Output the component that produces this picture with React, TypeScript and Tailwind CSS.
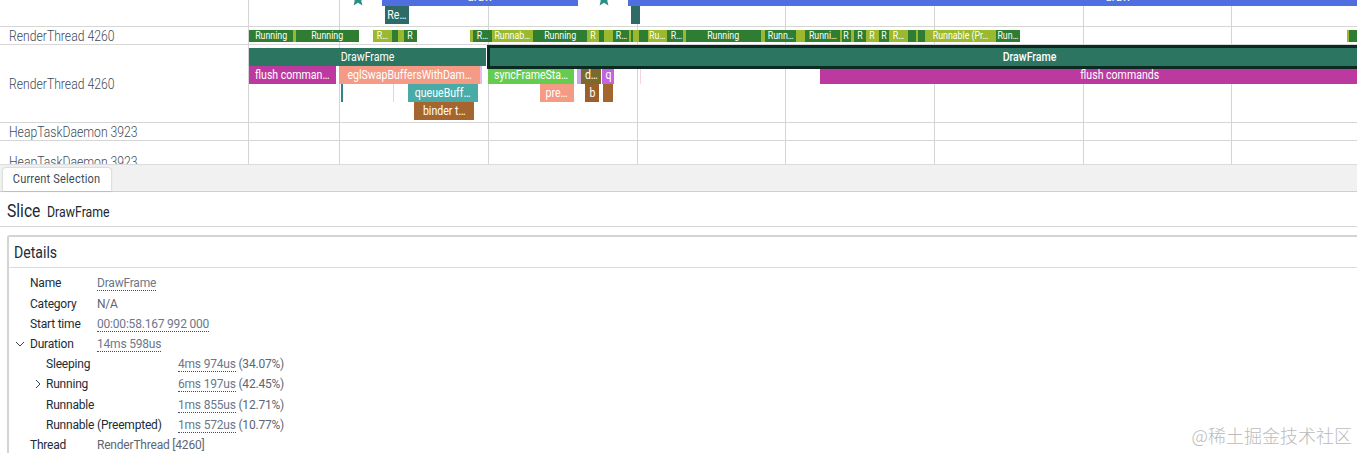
import React from "react";

type S = { x: number; e: number; c: string; t?: string };

const D = "#2f7d32";
const L = "#9ab92f";
const run = (a: [number, number, string, string?][]): S[] => a.map(([x, e, c, t]) => ({ x, e, c, t }));

const threadState = run([
  [249, 293, D, "Running"], [293, 296, L], [296, 359, D, "Running"],
  [373, 392, L, "R…"], [392, 398, D], [398, 404, L], [404, 417, D, "R"],
  [470, 473, L], [473, 492, D, "R…"], [492, 533, L, "Runnab…"], [533, 587, D, "Running"],
  [587, 599, L, "R"], [599, 604, D], [604, 613, L], [613, 629, D, "R…"], [629, 631, L], [631, 633, D], [633, 639, L],
  [639, 648, D], [648, 667, L, "Ru…"], [667, 669, D], [669, 683, D, "R…"], [683, 686, L],
  [686, 761, D, "Running"], [761, 765, L], [765, 796, D, "Runn…"], [796, 805, L], [805, 840, D, "Runni…"],
  [840, 842, L], [842, 851, D, "R"], [851, 854, L], [854, 866, D, "R"], [866, 879, L, "R"], [879, 889, D, "R"],
  [889, 908, L, "R…"], [908, 916, D], [916, 918, L], [918, 925, D], [925, 996, L, "Runnable (Pr…"],
  [996, 1020, D, "Run…"], [1347, 1349, L], [1349, 1357, D],
]);

const row3 = run([
  [249, 336, "#bc3aa0", "flush comman…"], [339, 480, "#f59a85", "eglSwapBuffersWithDam…"], [480, 482, "#e9bce6"],
  [488, 574, "#66cc4f", "syncFrameSta…"], [577, 581, "#c8a6ec"], [581, 601, "#7b6a2e", "d…"], [602, 614, "#c264e0", "q"],
  [640, 641, "#f8d4e2"], [820, 1420, "#bc3aa0", "flush commands"],
]);
const row4 = run([
  [341, 343, "#33808f"], [393, 394, "#dcdcc0"], [408, 478, "#4aaba6", "queueBuff…"],
  [540, 574, "#f59a85", "pre…"], [585, 599, "#9c5f2c", "b"], [603, 613, "#a5652f"],
]);
const row5 = run([[414, 474, "#a5652f", "binder t…"]]);

const grid = [248, 339, 488, 637, 785, 934, 1083, 1231];

function Squeeze({ children }: { children: React.ReactNode }) {
  return <span className="inline-block shrink-0 scale-x-[0.88]">{children}</span>;
}

function Slices({ items, h, size }: { items: S[]; h: string; size: string }) {
  return (
    <div className={`relative ${h}`}>
      {items.map((s, i) => (
        <div
          key={i}
          className={`absolute top-0 bottom-0 flex items-center justify-center overflow-hidden whitespace-nowrap text-white ${size}`}
          style={{ left: s.x - 249, width: s.e - s.x, backgroundColor: s.c }}
        >
          {s.t && <Squeeze>{s.t}</Squeeze>}
        </div>
      ))}
    </div>
  );
}

function Label({ children }: { children: React.ReactNode }) {
  return (
    <div className="w-[249px] shrink-0 pl-[9px] pt-[2px] text-[14px] font-light text-[#3c4a58] whitespace-nowrap">
      <span className="inline-block origin-left scale-x-[0.87]">{children}</span>
    </div>
  );
}

function Star() {
  return (
    <svg width="14" height="14" viewBox="0 0 14 14" className="block">
      <path d="M7 0 L9 5 L14 5.3 L10.2 8.6 L11.4 13.6 L7 10.8 L2.6 13.6 L3.8 8.6 L0 5.3 L5 5 Z" fill="#2a8f86" />
    </svg>
  );
}

function Timeline() {
  return (
    <div className="relative h-[164px] overflow-hidden bg-white">
      {/* time grid sits behind the tracks */}
      {grid.map((x) => (
        <div key={x} className="pointer-events-none absolute inset-y-0 w-px bg-[#d4d4d4]" style={{ left: x }} />
      ))}

      {/* top process track */}
      <div className="relative flex h-[27px] border-b border-[#d6d6d6]">
        <div className="w-[249px] shrink-0" />
        <div className="relative flex-1">
          <div className="absolute left-[102px] top-[-8px]"><Star /></div>
          <div className="absolute left-[348px] top-[-8px]"><Star /></div>
          <div className="absolute left-[133px] top-0 flex h-[6px] w-[196px] items-end justify-center overflow-hidden bg-[#4f6fe0] pb-[3px] text-[12px] leading-[12px] text-white">draw</div>
          <div className="absolute left-[379px] top-0 flex h-[6px] w-[980px] items-end justify-center overflow-hidden bg-[#4f6fe0] pb-[3px] text-[12px] leading-[12px] text-white">draw</div>
          <div className="absolute left-[136px] top-[6px] flex h-[18px] w-[24px] items-center justify-center overflow-hidden bg-[#2e6b66] text-[12px] text-white"><Squeeze>Re…</Squeeze></div>
          <div className="absolute left-[382px] top-[6px] h-[18px] w-[9px] bg-[#2e6b66]" />
        </div>
      </div>

      {/* thread state */}
      <div className="relative flex h-[18px] items-center border-b border-[#d6d6d6]">
        <Label>RenderThread 4260</Label>
        <div className="relative flex-1 self-stretch pt-[3px]">
          <Slices items={threadState} h="h-[12px]" size="text-[10px] leading-[12px]" />
        </div>
      </div>

      {/* slices */}
      <div className="relative flex h-[78px] items-center border-b border-[#d6d6d6]">
        <Label>RenderThread 4260</Label>
        <div className="relative flex-1 self-stretch pt-[3px]">
          <div className="relative h-[18px]">
            <div className="absolute inset-y-0 left-0 flex w-[237px] items-center justify-center bg-[#2c7560] text-[12px] text-white"><Squeeze>DrawFrame</Squeeze></div>
            <div className="absolute bottom-[-3px] left-[238px] top-[-3px] z-10 flex w-[1086px] items-center justify-center border-[3px] border-[#0a2a22] bg-[#2c7560] text-[12px] font-medium text-white"><Squeeze>DrawFrame</Squeeze></div>
          </div>
          <Slices items={row3} h="h-[18px]" size="text-[12px]" />
          <Slices items={row4} h="h-[18px]" size="text-[12px]" />
          <Slices items={row5} h="h-[18px]" size="text-[12px]" />
        </div>
      </div>

      <div className="relative flex h-[18px] items-center border-b border-[#d6d6d6]">
        <Label>HeapTaskDaemon 3923</Label>
      </div>
      <div className="relative flex h-[41px] items-center">
        <Label>HeapTaskDaemon 3923</Label>
      </div>
    </div>
  );
}

function Val({ children }: { children: React.ReactNode }) {
  return <span className="border-b border-dotted border-[#34507e] leading-[13px] text-[#6b778c]">{children}</span>;
}

const rowCls = "flex h-[20.2px] items-center";

function Row({ label, children, chevron }: { label: string; children: React.ReactNode; chevron?: React.ReactNode }) {
  return (
    <div className={rowCls}>
      <div className="flex w-[30px] shrink-0 justify-end pr-[5px]">{chevron}</div>
      <div className="w-[67px] shrink-0 text-[#222b36]">{label}</div>
      <div className="text-[#5d6672]">{children}</div>
    </div>
  );
}

function SubRow({ label, children, chevron }: { label: string; children: React.ReactNode; chevron?: React.ReactNode }) {
  return (
    <div className={rowCls}>
      <div className="flex w-[46px] shrink-0 justify-end pr-[3px]">{chevron}</div>
      <div className="w-[132px] shrink-0 text-[#222b36]">{label}</div>
      <div className="text-[#5d6672]">{children}</div>
    </div>
  );
}

const Down = (
  <svg width="10" height="10" viewBox="0 0 10 10" fill="none" stroke="#33404e" strokeWidth="1"><path d="M1 3 L5 7 L9 3" /></svg>
);
const Right = (
  <svg width="10" height="10" viewBox="0 0 10 10" fill="none" stroke="#33404e" strokeWidth="1"><path d="M3 1 L7 5 L3 9" /></svg>
);

export default function App() {
  return (
    <div className="relative h-[453px] w-[1357px] overflow-hidden bg-white [font-family:Roboto,sans-serif]">
      <Timeline />

      {/* tab strip */}
      <div className="flex h-[28px] items-end border-y border-t-[#dcdcdc] border-b-[#cfcfcf] bg-[#f1f1f1] pl-[3px]">
        <div className="flex h-[23px] w-[108px] items-center justify-center rounded-t-[3px] bg-white pb-[2px] text-[12px] text-[#3d4b5c] shadow-[0_0_2px_rgba(0,0,0,0.3)]">
          <span className="inline-block shrink-0 scale-x-[0.92] whitespace-nowrap tracking-[0.2px]">Current Selection</span>
        </div>
      </div>

      {/* header */}
      <div className="flex h-[35px] items-baseline border-b border-[#d8d8d8] pl-[7px] pt-[5px] text-[#202832]">
        <span className="inline-block w-[40px] origin-left scale-x-[0.87] text-[18px]">Slice</span>
        <span className="inline-block origin-left scale-x-[0.88] text-[14px]">DrawFrame</span>
      </div>

      {/* card */}
      <div className="ml-[7px] mt-[8px] rounded-tl-[3px] border-l-2 border-t-2 border-[#d4d4d4]">
        <div className="flex h-[31px] items-center border-b border-[#dcdcdc] pl-[5px] pt-[1px] text-[16px] text-[#222b36]">
          <span className="inline-block origin-left scale-x-[0.88]">Details</span>
        </div>
        <div className="-ml-[9px] pt-[5.4px] text-[12px] tracking-[-0.2px]">
          <Row label="Name"><Val>DrawFrame</Val></Row>
          <Row label="Category">N/A</Row>
          <Row label="Start time"><Val>00:00:58.167 992 000</Val></Row>
          <Row label="Duration" chevron={Down}><Val>14ms 598us</Val></Row>
          <SubRow label="Sleeping"><Val>4ms 974us</Val> (34.07%)</SubRow>
          <SubRow label="Running" chevron={Right}><Val>6ms 197us</Val> (42.45%)</SubRow>
          <SubRow label="Runnable"><Val>1ms 855us</Val> (12.71%)</SubRow>
          <SubRow label="Runnable (Preempted)"><Val>1ms 572us</Val> (10.77%)</SubRow>
          <Row label="Thread">RenderThread [4260]</Row>
        </div>
      </div>

      {/* watermark */}
      <div className="absolute bottom-[8px] right-[5px] text-[18px] leading-[20px] text-[#bbbbbb] [font-family:'Noto_Sans_CJK_SC',sans-serif] font-light">
        @稀土掘金技术社区
      </div>
    </div>
  );
}
